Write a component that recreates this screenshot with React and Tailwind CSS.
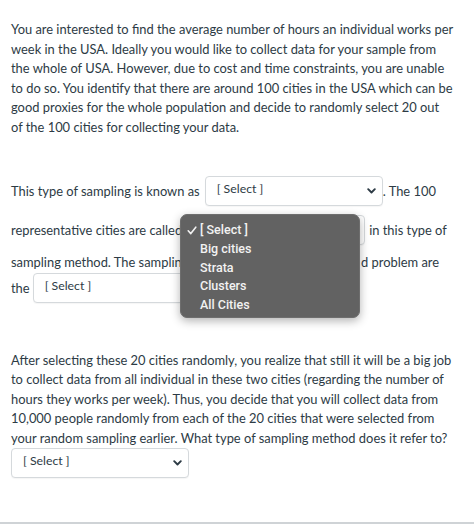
import React from "react";

function Chevron() {
  return (
    <svg width="9" height="6" viewBox="0 0 9 6" className="shrink-0">
      <path d="M1.2 1.2 L4.5 4.5 L7.8 1.2" fill="none" stroke="#2d3b45" strokeWidth="1.9" strokeLinecap="round" strokeLinejoin="round" />
    </svg>
  );
}

function Check() {
  return (
    <svg width="10" height="9" viewBox="0 0 10 9">
      <path d="M1.2 4.8 L3.8 7.6 L8.8 1.2" fill="none" stroke="#f2f2f2" strokeWidth="1.6" strokeLinecap="round" strokeLinejoin="round" />
    </svg>
  );
}

function FakeSelect({ className = "" }) {
  return (
    <div
      className={`flex items-center justify-between h-[30px] w-[178px] shrink-0 bg-white border border-[#d5d9dc] rounded-[4px] pl-[11px] pr-[6px] shadow-[0_1px_1px_rgba(0,0,0,0.04)] ${className}`}
    >
      <span className="text-[12.3px] leading-none -mt-[3px]">[ Select ]</span>
      <Chevron />
    </div>
  );
}

const options = ["[ Select ]", "Big cities", "Strata", "Clusters", "All Cities"];

export default function App() {
  return (
    <div className="relative w-[474px] h-[530px] bg-white text-[#2d3b45] font-['Lato',sans-serif] text-[12.9px] overflow-hidden">
      <div className="px-[11px] pt-[20px]">
        <div className="leading-[19.6px] whitespace-nowrap">
          <div>You are interested to find the average number of hours an individual works per</div>
          <div>week in the USA. Ideally you would like to collect data for your sample from</div>
          <div>the whole of USA. However, due to cost and time constraints, you are unable</div>
          <div>to do so. You identify that there are around 100 cities in the USA which can be</div>
          <div>good proxies for the whole population and decide to randomly select 20 out</div>
          <div>of the 100 cities for collecting your data.</div>
        </div>

        <div className="mt-[38px] whitespace-nowrap">
          <div className="flex items-center h-[30px]">
            <span className="mt-[3px]">This type of sampling is known as</span>
            <FakeSelect className="ml-[5px]" />
            <span className="mt-[3px]">. The 100</span>
          </div>
          <div className="flex items-center h-[30px] mt-[9px]">
            <span className="mt-[3px]">representative cities are called</span>
            <FakeSelect className="ml-[5px]" />
            <span className="mt-[3px] ml-[4px]">in this type of</span>
          </div>
          <div className="flex items-center h-[20px] mt-[8px]">
            <span className="w-[350px] overflow-hidden shrink-0">sampling method. The sampling units in the above-mentione</span>
            <span>d problem are</span>
          </div>
          <div className="flex items-center h-[30px]">
            <span className="mt-[3px]">the</span>
            <FakeSelect className="ml-[3px]" />
          </div>
        </div>

        <div className="mt-[48px] leading-[19.5px] whitespace-nowrap">
          <div>After selecting these 20 cities randomly, you realize that still it will be a big job</div>
          <div>to collect data from all individual in these two cities (regarding the number of</div>
          <div>hours they works per week). Thus, you decide that you will collect data from</div>
          <div>10,000 people randomly from each of the 20 cities that were selected from</div>
          <div>your random sampling earlier. What type of sampling method does it refer to?</div>
        </div>
        <FakeSelect />
      </div>

      <div className="absolute left-0 right-0 top-[522px] h-[2px] bg-[#cfd3d6]" />

      <div className="absolute left-[180px] top-[214px] w-[180px] h-[104px] bg-[#626262] rounded-[7px] shadow-[0_3px_10px_rgba(0,0,0,0.3)] border border-[#6e6e6e] pt-[6px] font-['Roboto',sans-serif] text-[12.5px] font-medium text-[#f2f2f2]">
        {options.map((o, i) => (
          <div key={o} className="flex items-center h-[18.8px]">
            <span className="w-[19px] pl-[6px] flex items-center">{i === 0 ? <Check /> : null}</span>
            <span>{o}</span>
          </div>
        ))}
      </div>
    </div>
  );
}
